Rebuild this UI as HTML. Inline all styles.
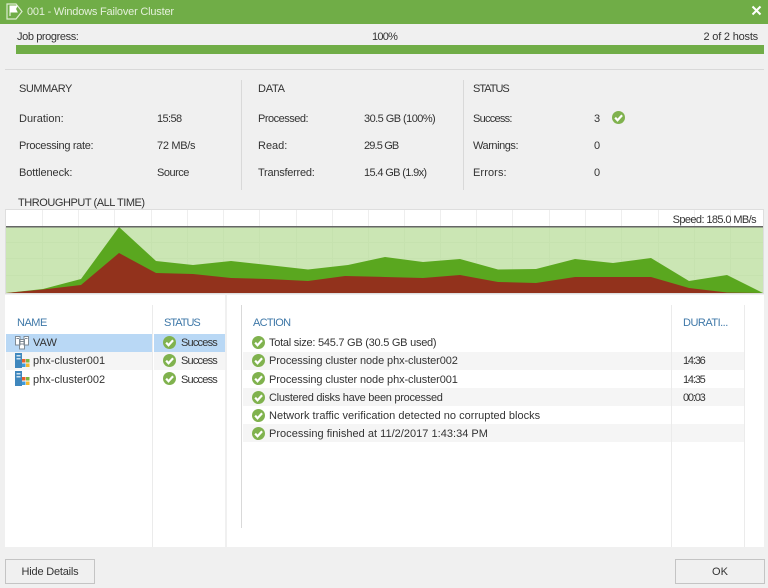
<!DOCTYPE html>
<html><head><meta charset="utf-8">
<style>
html,body{margin:0;padding:0}
body{width:768px;height:588px;position:relative;overflow:hidden;background:#f0f0f0;font-family:"Liberation Sans",sans-serif;font-size:11px;color:#333}
.t{position:absolute;white-space:nowrap;line-height:14px;height:14px;margin-top:1px}
.b{position:absolute}
.h{color:#3f78a8}
svg{position:absolute;display:block}
</style></head><body>
<svg width="0" height="0" style="position:absolute"><defs>
<symbol id="c" viewBox="0 0 12 12"><circle cx="6" cy="6" r="6" fill="#80b24e"/><path d="M2.900 6.100L5.100 8.500L9.300 3.900" fill="none" stroke="#fff" stroke-width="2"/></symbol>
<symbol id="s" viewBox="0 0 16 16"><rect x="1" y="0" width="7" height="15" fill="#3f87bd"/><rect x="2.500" y="2" width="4" height="1.500" fill="#cfe3f1"/><rect x="2.500" y="5" width="4" height="1.500" fill="#cfe3f1"/><rect x="8" y="6" width="3.500" height="3.500" fill="#e8622c"/><rect x="12" y="6" width="3.500" height="3.500" fill="#7db53e"/><rect x="8" y="10.500" width="3.500" height="3.500" fill="#3f9bd8"/><rect x="12" y="10.500" width="3.500" height="3.500" fill="#f4b92e"/></symbol>
</defs></svg>

<div class="b" style="left:0;top:0;width:768px;height:24px;background:#70ad47"></div>
<svg style="left:5px;top:2px" width="19" height="19" viewBox="0 0 19 19"><path d="M2 2H11L17 9.500L11 17H2Z" fill="none" stroke="#dcebd0" stroke-width="1.200"/><path d="M5 3.500V14M5 4H12L10.500 7L12 10H5" fill="#fff" stroke="#fff" stroke-width="1"/></svg>
<div class="t" style="left:27px;top:4px;color:#e4f0da;letter-spacing:-.2px">001 - Windows Failover Cluster</div>
<svg style="left:751px;top:5px" width="11" height="11" viewBox="0 0 11 11"><path d="M1.500 1.500L9.500 9.500M9.500 1.500L1.500 9.500" stroke="#fff" stroke-width="2"/></svg>

<div class="t" style="left:17px;top:29px;letter-spacing:-.4px">Job progress:</div>
<div class="t" style="left:372px;top:29px;letter-spacing:-.75px">100%</div>
<div class="t" style="right:10px;top:29px;letter-spacing:-.2px">2 of 2 hosts</div>
<div class="b" style="left:16px;top:45px;width:748px;height:9px;background:#70ad47"></div>
<div class="b" style="left:5px;top:69px;width:759px;height:1px;background:#d9d9d9"></div>

<div class="b" style="left:241px;top:80px;width:1px;height:110px;background:#d9d9d9"></div>
<div class="b" style="left:463px;top:80px;width:1px;height:110px;background:#d9d9d9"></div>

<div class="t" style="left:19px;top:81px;letter-spacing:-.45px">SUMMARY</div>
<div class="t" style="left:19px;top:111px">Duration:</div><div class="t" style="left:157px;top:111px;letter-spacing:-.6px">15:58</div>
<div class="t" style="left:19px;top:138px;letter-spacing:-.33px">Processing rate:</div><div class="t" style="left:157px;top:138px;letter-spacing:-.3px">72 MB/s</div>
<div class="t" style="left:19px;top:165px;letter-spacing:-.1px">Bottleneck:</div><div class="t" style="left:157px;top:165px;letter-spacing:-.5px">Source</div>

<div class="t" style="left:258px;top:81px;letter-spacing:-.25px">DATA</div>
<div class="t" style="left:258px;top:111px;letter-spacing:-.5px">Processed:</div><div class="t" style="left:364px;top:111px;letter-spacing:-.55px">30.5 GB (100%)</div>
<div class="t" style="left:258px;top:138px">Read:</div><div class="t" style="left:364px;top:138px;letter-spacing:-.85px">29.5 GB</div>
<div class="t" style="left:258px;top:165px;letter-spacing:-.25px">Transferred:</div><div class="t" style="left:364px;top:165px;letter-spacing:-.65px">15.4 GB (1.9x)</div>

<div class="t" style="left:473px;top:81px;letter-spacing:-1px">STATUS</div>
<div class="t" style="left:473px;top:111px;letter-spacing:-.75px">Success:</div><div class="t" style="left:594px;top:111px">3</div>
<svg style="left:612px;top:111px" width="13" height="13"><use href="#c"/></svg>
<div class="t" style="left:473px;top:138px;letter-spacing:-.45px">Warnings:</div><div class="t" style="left:594px;top:138px">0</div>
<div class="t" style="left:473px;top:165px;letter-spacing:.1px">Errors:</div><div class="t" style="left:594px;top:165px">0</div>

<div class="t" style="left:18px;top:195px;letter-spacing:-.45px">THROUGHPUT (ALL TIME)</div>

<svg style="left:5px;top:209px" width="759" height="85" viewBox="5 209 759 85">
<rect x="5" y="209" width="759" height="85" fill="#fff"/>
<rect x="5.500" y="209.500" width="758" height="84" fill="none" stroke="#dedede"/>
<path d="M42.500 210V226M78.500 210V226M114.500 210V226M151.500 210V226M187.500 210V226M223.500 210V226M259.500 210V226M296.500 210V226M332.500 210V226M368.500 210V226M404.500 210V226M440.500 210V226M476.500 210V226M512.500 210V226M549.500 210V226M585.500 210V226M621.500 210V226M658.500 210V226M694.500 210V226M730.500 210V226" stroke="#eeeeee"/>
<rect x="6" y="227" width="757" height="66" fill="#cbe6b4"/>
<path d="M42.500 227V292M78.500 227V292M114.500 227V292M151.500 227V292M187.500 227V292M223.500 227V292M259.500 227V292M296.500 227V292M332.500 227V292M368.500 227V292M404.500 227V292M440.500 227V292M476.500 227V292M512.500 227V292M549.500 227V292M585.500 227V292M621.500 227V292M658.500 227V292M694.500 227V292M730.500 227V292M6 242.500H763M6 258.500H763M6 275.500H763" stroke="#c6e2af"/>
<path d="M6 293L43 289L81 279L119 227L156 261L193 265L231 261L268 265L308 269.500L348 265L385 257L423 262L460 259L498 269.500L536 269L575 259L613 263L651 258L689 281L727 275L763 293Z" fill="#5aa71f"/>
<path d="M6 293L43 289.500L81 285L119 253L156 273L193 274L231 278L268 279L308 281L345 276L385 277L423 278L460 275L498 282L536 283L575 277L613 277L651 277L689 288L727 292.500L763 293Z" fill="#92321c"/>
<rect x="6" y="226" width="757" height="1.500" fill="#666"/>
</svg>
<div class="t" style="right:12px;top:212px;letter-spacing:-.6px">Speed: 185.0 MB/s</div>

<div class="b" style="left:5px;top:295px;width:759px;height:252px;background:#fff"></div>
<div class="b" style="left:6px;top:352px;width:146px;height:18px;background:#f5f5f5"></div>
<div class="b" style="left:154px;top:352px;width:71px;height:18px;background:#f5f5f5"></div>
<div class="b" style="left:6px;top:334px;width:146px;height:18px;background:#b9d8f5"></div>
<div class="b" style="left:154px;top:334px;width:71px;height:18px;background:#b9d8f5"></div>
<div class="b" style="left:243px;top:352px;width:501px;height:18px;background:#f5f5f5"></div>
<div class="b" style="left:243px;top:388px;width:501px;height:18px;background:#f5f5f5"></div>
<div class="b" style="left:243px;top:424px;width:501px;height:18px;background:#f5f5f5"></div>

<div class="b" style="left:152px;top:305px;width:1px;height:242px;background:#ebebeb"></div>
<div class="b" style="left:225px;top:295px;width:2px;height:252px;background:#f0f0f0"></div>
<div class="b" style="left:241px;top:305px;width:1px;height:223px;background:#d9d9d9"></div>
<div class="b" style="left:671px;top:305px;width:1px;height:242px;background:#ebebeb"></div>
<div class="b" style="left:744px;top:305px;width:1px;height:242px;background:#ebebeb"></div>

<div class="t h" style="left:17px;top:315px;letter-spacing:-.5px">NAME</div>
<div class="t h" style="left:164px;top:315px;letter-spacing:-1px">STATUS</div>
<div class="t h" style="left:253px;top:315px;letter-spacing:-.7px">ACTION</div>
<div class="t h" style="left:683px;top:315px;letter-spacing:-.5px">DURATI...</div>

<svg style="left:14px;top:334px" width="16" height="16" viewBox="0 0 16 16"><path d="M1.500 2.500H6V11H1.500ZM10 2.500H14.500V11H10ZM5.500 5.500H10.500V15H5.500Z" fill="#fff" stroke="#7f8a94"/><path d="M2.500 4.500H5M11 4.500H13.500M6.500 7.500H9.500M6.500 10H9.500" stroke="#7f8a94"/></svg>
<div class="t" style="left:33px;top:335px">VAW</div>
<svg style="left:14px;top:353px" width="16" height="16"><use href="#s"/></svg>
<div class="t" style="left:33px;top:353px">phx-cluster001</div>
<svg style="left:14px;top:371px" width="16" height="16"><use href="#s"/></svg>
<div class="t" style="left:33px;top:372px">phx-cluster002</div>

<svg style="left:163px;top:336px" width="13" height="13"><use href="#c"/></svg><div class="t" style="left:181px;top:335px;letter-spacing:-.8px">Success</div>
<svg style="left:163px;top:354px" width="13" height="13"><use href="#c"/></svg><div class="t" style="left:181px;top:353px;letter-spacing:-.8px">Success</div>
<svg style="left:163px;top:372px" width="13" height="13"><use href="#c"/></svg><div class="t" style="left:181px;top:372px;letter-spacing:-.8px">Success</div>

<svg style="left:252px;top:336px" width="13" height="13"><use href="#c"/></svg><div class="t" style="left:269px;top:335px;letter-spacing:-.25px">Total size: 545.7 GB (30.5 GB used)</div>
<svg style="left:252px;top:354px" width="13" height="13"><use href="#c"/></svg><div class="t" style="left:269px;top:353px;letter-spacing:-.1px">Processing cluster node phx-cluster002</div>
<svg style="left:252px;top:372px" width="13" height="13"><use href="#c"/></svg><div class="t" style="left:269px;top:372px;letter-spacing:-.1px">Processing cluster node phx-cluster001</div>
<svg style="left:252px;top:391px" width="13" height="13"><use href="#c"/></svg><div class="t" style="left:269px;top:390px;letter-spacing:-.28px">Clustered disks have been processed</div>
<svg style="left:252px;top:409px" width="13" height="13"><use href="#c"/></svg><div class="t" style="left:269px;top:408px;letter-spacing:.02px">Network traffic verification detected no corrupted blocks</div>
<svg style="left:252px;top:427px" width="13" height="13"><use href="#c"/></svg><div class="t" style="left:269px;top:426px;letter-spacing:.02px">Processing finished at 11/2/2017 1:43:34 PM</div>

<div class="t" style="left:683px;top:353px;letter-spacing:-1.200px">14:36</div>
<div class="t" style="left:683px;top:372px;letter-spacing:-1.200px">14:35</div>
<div class="t" style="left:683px;top:390px;letter-spacing:-1.200px">00:03</div>

<div class="b" style="left:5px;top:559px;width:88px;height:23px;border:1px solid #c4c4c4;background:#f0f0f0;text-align:center;line-height:25px;letter-spacing:-.2px">Hide Details</div>
<div class="b" style="left:675px;top:559px;width:88px;height:23px;border:1px solid #c4c4c4;background:#f0f0f0;text-align:center;line-height:25px">OK</div>
</body></html>
